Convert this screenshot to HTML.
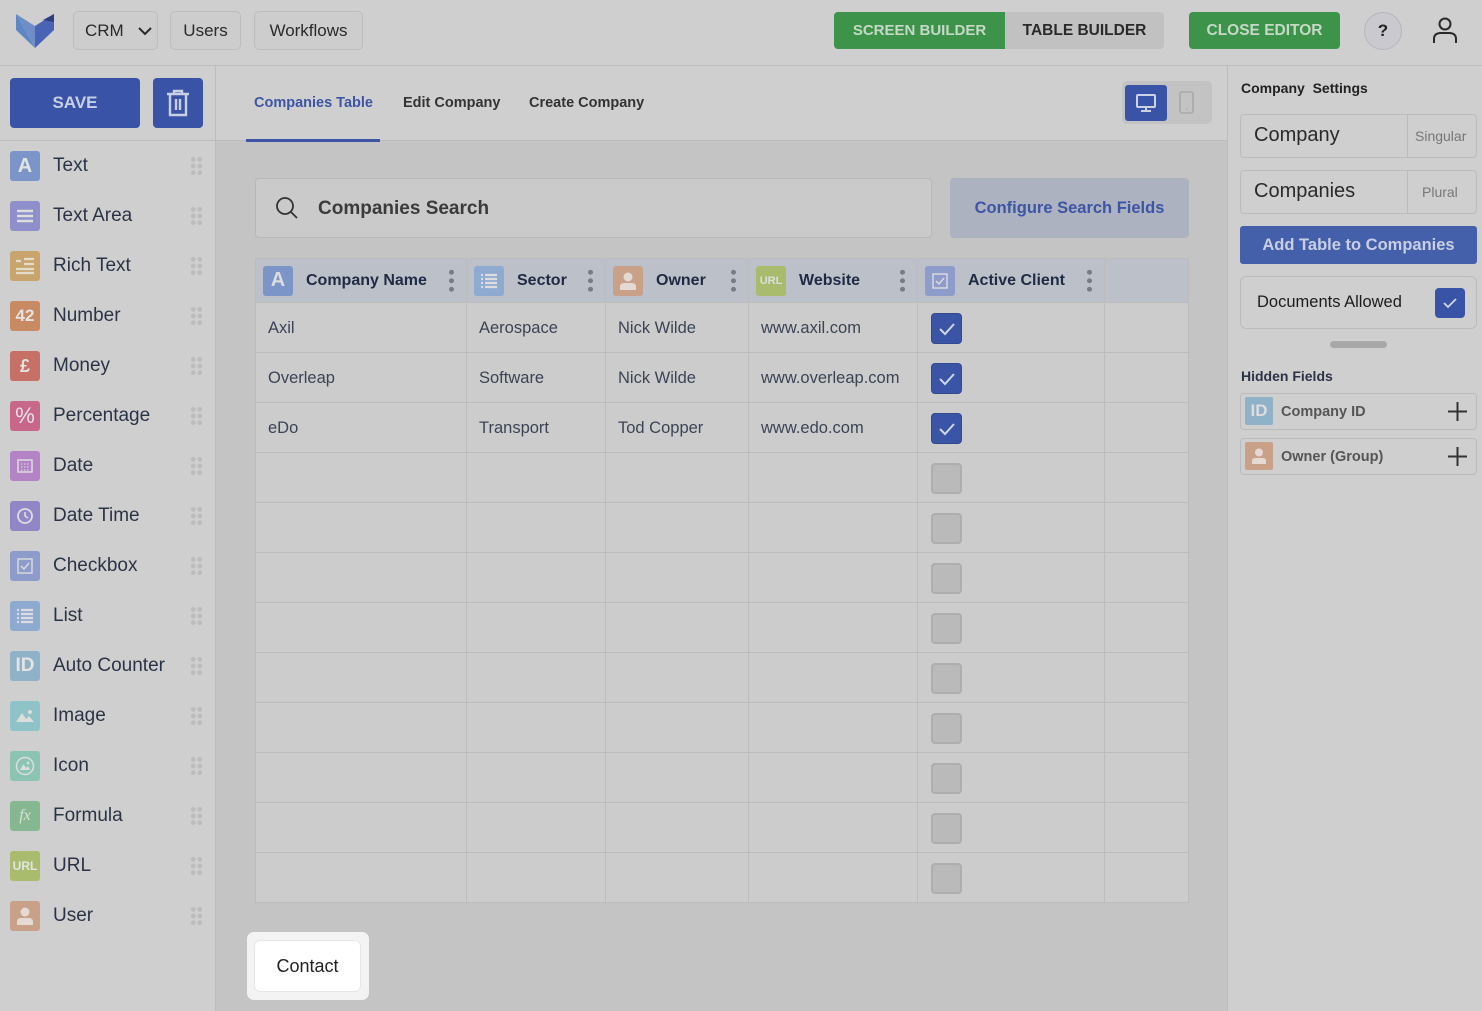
<!DOCTYPE html>
<html><head><meta charset="utf-8"><style>
*{box-sizing:border-box;margin:0;padding:0}
body{width:1482px;height:1011px;position:relative;overflow:hidden;background:#cfcfcf;font-family:"Liberation Sans",sans-serif;color:#262f3e}
.a{position:absolute}
.btn{position:absolute;border:1px solid #bdbdbd;border-radius:5px;background:#cdcdcd;font-size:17px;color:#2a2a2a;display:flex;align-items:center;justify-content:center}
.item{position:absolute;left:10px;height:30px;width:195px;display:flex;align-items:center}
.ic{width:30px;height:30px;border-radius:3px;display:flex;align-items:center;justify-content:center;color:#e4e4e4;font-weight:bold;font-size:18px}
.item span{margin-left:13px;font-size:19px;color:#2b3446}
.dots{position:absolute;right:2px;top:5px;width:13px;height:20px;background:radial-gradient(circle,#bcbcbc 2.2px,transparent 2.5px) 0 0/6.5px 6.7px}
table{border-collapse:collapse;position:absolute;left:255px;top:258px;width:934px}
td{border:1px solid #bcbcbc;height:50px;font-size:16.5px;color:#3b4455;padding-left:12px;padding-top:2px;background:#cccccc}
th{background:#bcc0c8;height:44px;border:1px solid #bcbcbc;text-align:left;padding-left:7px;font-size:16px;color:#1f2a44;font-weight:bold}
.hc{display:flex;align-items:center;position:relative}
.hi{width:30px;height:30px;border-radius:3px;margin-right:13px;display:flex;align-items:center;justify-content:center;color:#ddd;font-weight:bold}
.vd{position:absolute;right:12px;top:2px;width:5px;height:24px;background:radial-gradient(circle,#777d88 2.3px,transparent 2.6px) 0 0/5px 8.5px}
.cb{width:31px;height:31px;border-radius:4px;margin-left:1px}
.on{background:#3b55a6;border:1px solid #33498f;display:flex;align-items:center;justify-content:center}
.off{background:#bababa;border:2px solid #aeaeae}
</style></head><body>
<div class="a" style="left:0;top:65px;width:1482px;height:1px;background:#bcbcbc"></div>
<svg class="a" style="left:15px;top:12px" width="40" height="37" viewBox="0 0 40 37"><path d="M1 2 L20 14 L20 36 Z" fill="#6f8ec7"/><path d="M20 14 L39 2 L39 18 L20 36 Z" fill="#4a63b4"/><path d="M28 8 L39 2 L39 10 Z" fill="#2f3e80"/><path d="M1 2 L1 18 L20 36 Z" fill="#5f86c4"/></svg>
<div class="btn" style="left:73px;top:11px;width:85px;height:39px;justify-content:flex-start;padding-left:11px">CRM<svg style="margin-left:14px" width="14" height="10" viewBox="0 0 14 10"><path d="M1 2 L7 8 L13 2" stroke="#2a2a2a" stroke-width="2" fill="none"/></svg></div>
<div class="btn" style="left:170px;top:11px;width:71px;height:39px">Users</div>
<div class="btn" style="left:254px;top:11px;width:109px;height:39px">Workflows</div>
<div class="a" style="left:834px;top:12px;width:330px;height:37px;border-radius:4px;background:#c1c1c1"></div>
<div class="a" style="left:834px;top:12px;width:171px;height:37px;border-radius:4px 0 0 4px;background:#3d934a;color:#c6d9c8;font-weight:bold;font-size:15px;display:flex;align-items:center;justify-content:center">SCREEN BUILDER</div>
<div class="a" style="left:1005px;top:12px;width:159px;height:37px;color:#2a2a2a;font-weight:bold;font-size:15.5px;display:flex;align-items:center;justify-content:center">TABLE BUILDER</div>
<div class="a" style="left:1189px;top:12px;width:151px;height:37px;border-radius:4px;background:#3d934a;color:#c6d9c8;font-weight:bold;font-size:15.5px;display:flex;align-items:center;justify-content:center">CLOSE EDITOR</div>
<div class="a" style="left:1364px;top:12px;width:38px;height:38px;border-radius:50%;border:1px solid #b5b5bd;background:#c9c9cf;font-size:17px;font-weight:bold;display:flex;align-items:center;justify-content:center;color:#222">?</div>
<svg class="a" style="left:1432px;top:16px" width="26" height="28" viewBox="0 0 26 28"><circle cx="13" cy="8" r="5.5" stroke="#2a2a2a" stroke-width="2" fill="none"/><path d="M2 27 V23 Q2 17 9 17 H17 Q24 17 24 23 V27" stroke="#2a2a2a" stroke-width="2" fill="none"/></svg>

<div class="a" style="left:215px;top:66px;width:1px;height:945px;background:#bcbcbc"></div>
<div class="a" style="left:0;top:140px;width:215px;height:1px;background:#bcbcbc"></div>
<div class="a" style="left:10px;top:78px;width:130px;height:50px;border-radius:4px;background:#3953a6;color:#c9d0e6;font-weight:bold;font-size:17px;display:flex;align-items:center;justify-content:center">SAVE</div>
<div class="a" style="left:153px;top:78px;width:50px;height:50px;border-radius:4px;background:#3953a6;display:flex;align-items:center;justify-content:center"><svg width="26" height="30" viewBox="0 0 26 30"><path d="M2 6 H24 M9 6 V3 H17 V6 M5 6 V27 H21 V6 M11 11 V22 M15 11 V22" stroke="#c9d0e6" stroke-width="2.4" fill="none"/></svg></div>

<div class="item" style="top:151px"><div class="ic" style="background:#7b95c9;font-size:20px">A</div><span>Text</span><div class="dots"></div></div>
<div class="item" style="top:201px"><div class="ic" style="background:#8e8fcb"><svg width="18" height="14"><path d="M1 2H17M1 7H17M1 12H17" stroke="#ddd" stroke-width="2.4"/></svg></div><span>Text Area</span><div class="dots"></div></div>
<div class="item" style="top:251px"><div class="ic" style="background:#c9a56e"><svg width="20" height="18"><path d="M9 2H19M9 7H19M1 12H19M1 16H19M1 4H6" stroke="#e4dccb" stroke-width="2.2"/></svg></div><span>Rich Text</span><div class="dots"></div></div>
<div class="item" style="top:301px"><div class="ic" style="background:#c88a62;font-size:17px">42</div><span>Number</span><div class="dots"></div></div>
<div class="item" style="top:351px"><div class="ic" style="background:#c77066">£</div><span>Money</span><div class="dots"></div></div>
<div class="item" style="top:401px"><div class="ic" style="background:#c9678a;font-size:22px;font-weight:normal">%</div><span>Percentage</span><div class="dots"></div></div>
<div class="item" style="top:451px"><div class="ic" style="background:#b383c6"><svg width="16" height="14"><rect x="1" y="1" width="14" height="12" stroke="#ddd" fill="none" stroke-width="1.5"/><path d="M4 5H12M4 8H12M4 11H12" stroke="#ddd" stroke-dasharray="1.5 1.5"/></svg></div><span>Date</span><div class="dots"></div></div>
<div class="item" style="top:501px"><div class="ic" style="background:#9287c6"><svg width="18" height="18"><circle cx="9" cy="9" r="7" stroke="#ddd" stroke-width="1.8" fill="none"/><path d="M9 5V9L12 11" stroke="#ddd" stroke-width="1.6" fill="none"/></svg></div><span>Date Time</span><div class="dots"></div></div>
<div class="item" style="top:551px"><div class="ic" style="background:#8e9ccc"><svg width="16" height="16"><rect x="1" y="1" width="14" height="14" stroke="#ddd" fill="none" stroke-width="1.4"/><path d="M4 8L7 11L12 5" stroke="#ddd" fill="none" stroke-width="1.4"/></svg></div><span>Checkbox</span><div class="dots"></div></div>
<div class="item" style="top:601px"><div class="ic" style="background:#8eaad0"><svg width="18" height="16"><path d="M5 2H17M5 6H17M5 10H17M5 14H17M1 2H3M1 6H3M1 10H3M1 14H3" stroke="#ddd" stroke-width="2.2"/></svg></div><span>List</span><div class="dots"></div></div>
<div class="item" style="top:651px"><div class="ic" style="background:#8fb2c9;font-size:19px">ID</div><span>Auto Counter</span><div class="dots"></div></div>
<div class="item" style="top:701px"><div class="ic" style="background:#8ec3c8"><svg width="20" height="14"><path d="M1 13L7 4L11 10L14 7L19 13Z" fill="#ddd"/><circle cx="15" cy="3" r="2" fill="#ddd"/></svg></div><span>Image</span><div class="dots"></div></div>
<div class="item" style="top:751px"><div class="ic" style="background:#8cc4b4"><svg width="20" height="20"><circle cx="10" cy="10" r="8.5" stroke="#ddd" stroke-width="1.5" fill="none"/><path d="M5 14L8.5 8L11 12L13 10L15 14Z" fill="#ddd"/><circle cx="13" cy="7" r="1.4" fill="#ddd"/></svg></div><span>Icon</span><div class="dots"></div></div>
<div class="item" style="top:801px"><div class="ic" style="background:#85b891;font-family:'Liberation Serif',serif;font-style:italic;font-weight:normal;font-size:16px;color:#d5e4d8">fx</div><span>Formula</span><div class="dots"></div></div>
<div class="item" style="top:851px"><div class="ic" style="background:#a9bc6e;font-size:12px">URL</div><span>URL</span><div class="dots"></div></div>
<div class="item" style="top:901px"><div class="ic" style="background:#c9a189"><svg width="18" height="20"><circle cx="9" cy="6" r="4.5" fill="#e4dad3"/><path d="M1 19V16Q1 12 5 12H13Q17 12 17 16V19Z" fill="#e4dad3"/></svg></div><span>User</span><div class="dots"></div></div>

<div class="a" style="left:216px;top:141px;width:1011px;height:870px;background:#c4c4c4"></div>
<div class="a" style="left:216px;top:140px;width:1011px;height:1px;background:#bcbcbc"></div>
<div class="a" style="left:254px;top:95px;font-size:14.5px;font-weight:bold;color:#3d55a5">Companies Table</div>
<div class="a" style="left:246px;top:139px;width:134px;height:3px;background:#3d55a5"></div>
<div class="a" style="left:403px;top:95px;font-size:14.5px;font-weight:bold;color:#333">Edit Company</div>
<div class="a" style="left:529px;top:95px;font-size:14.5px;font-weight:bold;color:#333">Create Company</div>
<div class="a" style="left:1122px;top:81px;width:90px;height:43px;border-radius:5px;background:#c3c3c3"></div>
<div class="a" style="left:1125px;top:85px;width:42px;height:36px;border-radius:3px;background:#3953a6;display:flex;align-items:center;justify-content:center"><svg width="22" height="20"><rect x="2" y="2" width="18" height="12" rx="1" stroke="#ccd2e6" stroke-width="2" fill="none"/><path d="M11 14V18M6 18H16" stroke="#ccd2e6" stroke-width="2"/></svg></div>
<svg class="a" style="left:1178px;top:91px" width="17" height="24"><rect x="2" y="1" width="13" height="21" rx="2" stroke="#a9a9a9" stroke-width="1.6" fill="none"/><circle cx="8.5" cy="18" r="0.8" fill="#a9a9a9"/></svg>

<div class="a" style="left:255px;top:178px;width:677px;height:60px;border:1px solid #b8b8b8;border-radius:4px;background:#cacaca"></div>
<svg class="a" style="left:275px;top:196px" width="24" height="24"><circle cx="10" cy="10" r="8" stroke="#333" stroke-width="1.8" fill="none"/><path d="M16 16L22 22" stroke="#333" stroke-width="1.8"/></svg>
<div class="a" style="left:318px;top:198px;font-size:19px;font-weight:bold;color:#3b3b3b">Companies Search</div>
<div class="a" style="left:950px;top:178px;width:239px;height:60px;border-radius:4px;background:#adb2c1;color:#3d55a5;font-weight:bold;font-size:16.5px;display:flex;align-items:center;justify-content:center">Configure Search Fields</div>

<table>
<tr>
<th style="width:211px"><div class="hc"><div class="hi" style="background:#7b95c9;font-size:20px">A</div>Company Name<div class="vd"></div></div></th>
<th style="width:139px"><div class="hc"><div class="hi" style="background:#8eaad0"><svg width="18" height="16"><path d="M5 2H17M5 6H17M5 10H17M5 14H17M1 2H3M1 6H3M1 10H3M1 14H3" stroke="#ddd" stroke-width="2.2"/></svg></div>Sector<div class="vd"></div></div></th>
<th style="width:143px"><div class="hc"><div class="hi" style="background:#c9a189"><svg width="18" height="20"><circle cx="9" cy="6" r="4.5" fill="#e4dad3"/><path d="M1 19V16Q1 12 5 12H13Q17 12 17 16V19Z" fill="#e4dad3"/></svg></div>Owner<div class="vd"></div></div></th>
<th style="width:169px"><div class="hc"><div class="hi" style="background:#a9bc6e;font-size:11px">URL</div>Website<div class="vd"></div></div></th>
<th style="width:187px"><div class="hc"><div class="hi" style="background:#8e9ccc"><svg width="16" height="16"><rect x="1" y="1" width="14" height="14" stroke="#ddd" fill="none" stroke-width="1.4"/><path d="M4 8L7 11L12 5" stroke="#ddd" fill="none" stroke-width="1.4"/></svg></div>Active Client<div class="vd"></div></div></th>
<th></th>
</tr>
<tr><td>Axil</td><td>Aerospace</td><td>Nick Wilde</td><td>www.axil.com</td><td><div class="cb on"><svg width="18" height="14"><path d="M2 7L7 12L16 2" stroke="#d0d6ea" stroke-width="2" fill="none"/></svg></div></td><td></td></tr>
<tr><td>Overleap</td><td>Software</td><td>Nick Wilde</td><td>www.overleap.com</td><td><div class="cb on"><svg width="18" height="14"><path d="M2 7L7 12L16 2" stroke="#d0d6ea" stroke-width="2" fill="none"/></svg></div></td><td></td></tr>
<tr><td>eDo</td><td>Transport</td><td>Tod Copper</td><td>www.edo.com</td><td><div class="cb on"><svg width="18" height="14"><path d="M2 7L7 12L16 2" stroke="#d0d6ea" stroke-width="2" fill="none"/></svg></div></td><td></td></tr>
<tr><td></td><td></td><td></td><td></td><td><div class="cb off"></div></td><td></td></tr>
<tr><td></td><td></td><td></td><td></td><td><div class="cb off"></div></td><td></td></tr>
<tr><td></td><td></td><td></td><td></td><td><div class="cb off"></div></td><td></td></tr>
<tr><td></td><td></td><td></td><td></td><td><div class="cb off"></div></td><td></td></tr>
<tr><td></td><td></td><td></td><td></td><td><div class="cb off"></div></td><td></td></tr>
<tr><td></td><td></td><td></td><td></td><td><div class="cb off"></div></td><td></td></tr>
<tr><td></td><td></td><td></td><td></td><td><div class="cb off"></div></td><td></td></tr>
<tr><td></td><td></td><td></td><td></td><td><div class="cb off"></div></td><td></td></tr>
<tr><td></td><td></td><td></td><td></td><td><div class="cb off"></div></td><td></td></tr>
</table>

<div class="a" style="left:247px;top:932px;width:122px;height:68px;border-radius:7px;background:#f3f3f3"></div>
<div class="a" style="left:254px;top:940px;width:107px;height:52px;border-radius:6px;background:#fff;border:1px solid #e6e6e6;font-size:18px;color:#222;display:flex;align-items:center;justify-content:center">Contact</div>

<div class="a" style="left:1227px;top:66px;width:1px;height:945px;background:#bcbcbc"></div>
<div class="a" style="left:1241px;top:80px;font-size:14px;font-weight:bold;color:#222">Company&nbsp; Settings</div>
<div class="a" style="left:1240px;top:114px;width:237px;height:44px;border:1px solid #bbb;border-radius:4px"></div>
<div class="a" style="left:1407px;top:115px;width:1px;height:42px;background:#bbb"></div>
<div class="a" style="left:1254px;top:124px;font-size:20px;color:#2a2a2a">Company</div>
<div class="a" style="left:1415px;top:128px;font-size:14px;color:#777">Singular</div>
<div class="a" style="left:1240px;top:170px;width:237px;height:44px;border:1px solid #bbb;border-radius:4px"></div>
<div class="a" style="left:1407px;top:171px;width:1px;height:42px;background:#bbb"></div>
<div class="a" style="left:1254px;top:180px;font-size:20px;color:#2a2a2a">Companies</div>
<div class="a" style="left:1422px;top:184px;font-size:14px;color:#777">Plural</div>
<div class="a" style="left:1240px;top:226px;width:237px;height:38px;border-radius:3px;background:#4560aa;color:#c8cfe5;font-weight:bold;font-size:16.5px;display:flex;align-items:center;justify-content:center">Add Table to Companies</div>
<div class="a" style="left:1240px;top:276px;width:237px;height:53px;border:1px solid #bbb;border-radius:6px"></div>
<div class="a" style="left:1257px;top:293px;font-size:16.5px;color:#1c1c1c">Documents Allowed</div>
<div class="a" style="left:1435px;top:288px;width:30px;height:30px;border-radius:4px;background:#3953a6;display:flex;align-items:center;justify-content:center"><svg width="16" height="12"><path d="M2 6L6 10L14 2" stroke="#d0d6ea" stroke-width="1.8" fill="none"/></svg></div>
<div class="a" style="left:1330px;top:341px;width:57px;height:7px;border-radius:4px;background:#a8a8a8"></div>
<div class="a" style="left:1241px;top:368px;font-size:14px;font-weight:bold;color:#2b3446">Hidden Fields</div>
<div class="a" style="left:1240px;top:393px;width:237px;height:37px;border:1px solid #bbb;border-radius:4px"></div>
<div class="a" style="left:1245px;top:397px;width:28px;height:28px;border-radius:2px;background:#8fb2c9;color:#ddd;font-weight:bold;font-size:17px;display:flex;align-items:center;justify-content:center">ID</div>
<div class="a" style="left:1281px;top:404px;font-size:14.5px;font-weight:bold;color:#555">Company ID</div>
<svg class="a" style="left:1447px;top:401px" width="21" height="21"><path d="M10.5 1V20M1 10.5H20" stroke="#333" stroke-width="2"/></svg>
<div class="a" style="left:1240px;top:438px;width:237px;height:37px;border:1px solid #bbb;border-radius:4px"></div>
<div class="a" style="left:1245px;top:442px;width:28px;height:28px;border-radius:2px;background:#c9a189;display:flex;align-items:center;justify-content:center"><svg width="16" height="18"><circle cx="8" cy="5.5" r="4" fill="#e4dad3"/><path d="M1 17V14Q1 11 4 11H12Q15 11 15 14V17Z" fill="#e4dad3"/></svg></div>
<div class="a" style="left:1281px;top:449px;font-size:14.5px;font-weight:bold;color:#555">Owner (Group)</div>
<svg class="a" style="left:1447px;top:446px" width="21" height="21"><path d="M10.5 1V20M1 10.5H20" stroke="#333" stroke-width="2"/></svg>
</body></html>
